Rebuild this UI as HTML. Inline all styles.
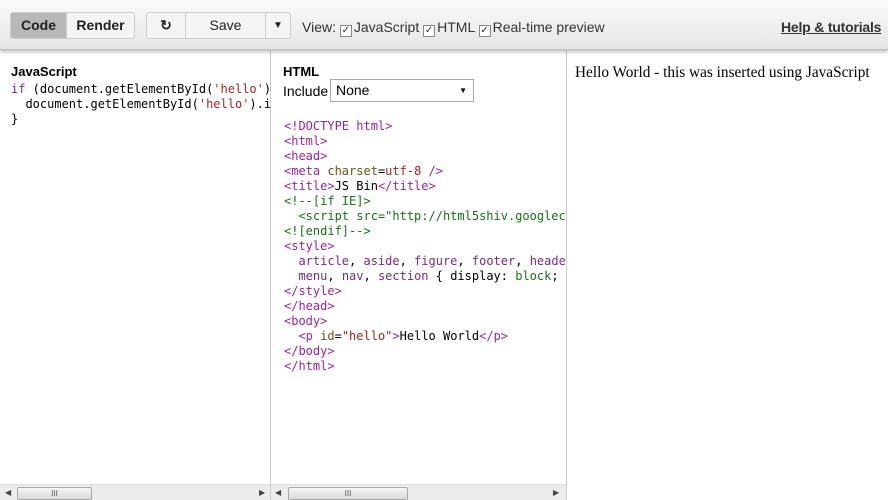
<!DOCTYPE html>
<html><head><style>
*{margin:0;padding:0;box-sizing:border-box}
body{width:888px;height:500px;overflow:hidden;background:#fff;font-family:"Liberation Sans",sans-serif;position:relative}
#bar{position:absolute;left:0;top:0;width:888px;height:50px;background:linear-gradient(#fafafa,#e6e6e6);border-bottom:1px solid #bbb;box-shadow:0 2px 4px rgba(0,0,0,.25);z-index:2}
.btn{position:absolute;top:12px;height:27px;border:1px solid #ccc;font-size:14px;line-height:25px;text-align:center;color:#222}
.lbl{position:absolute;top:19px;font-size:14px;color:#333}
.cb{display:inline-block;width:12px;height:12px;border:1px solid #888;background:#fff;vertical-align:-1px;margin-right:2px;font-size:10px;line-height:10px;text-align:center;color:#333}
.pane{position:absolute;top:51px;bottom:0}
pre{font-family:"DejaVu Sans Mono",monospace;font-size:12px;line-height:15px;color:#000;white-space:pre}
.t{color:#a0209f}.a{color:#7a4e0a}.s{color:#b11e1e}.c{color:#228b22}.k{color:#7a2a8a}.g{color:#117711}
.sb{position:absolute;bottom:0;height:16px;background:#ececec;border-top:1px solid #ddd}
.th{position:absolute;top:2px;height:13px;border:1px solid #aaa;border-radius:2px;background:linear-gradient(#f6f6f6,#d8d8d8);font-size:8px;text-align:center;line-height:11px;color:#555}
.ar{position:absolute;top:3px;font-size:8px;color:#444}
</style></head><body>
<div id="bar">
<div class="btn" style="left:10px;width:57px;background:#b8b8b8;font-weight:bold;border-radius:3px 0 0 3px">Code</div>
<div class="btn" style="left:66px;width:69px;background:#f4f4f4;font-weight:bold;border-radius:0 3px 3px 0">Render</div>
<div class="btn" style="left:146px;width:40px;background:#f4f4f4;border-radius:3px 0 0 3px;font-weight:bold">↻</div>
<div class="btn" style="left:185px;width:81px;background:#f4f4f4">Save</div>
<div class="btn" style="left:265px;width:26px;background:#f4f4f4;border-radius:0 3px 3px 0;font-size:10px">▼</div>
<div class="lbl" style="left:302px">View: <span class="cb">✓</span>JavaScript <span class="cb">✓</span>HTML <span class="cb">✓</span>Real-time preview</div>
<div class="lbl" style="left:781px;font-weight:bold;text-decoration:underline;color:#333;letter-spacing:-0.2px">Help &amp; tutorials</div>
</div>
<div class="pane" style="left:0;width:271px;border-right:1px solid #ccc;overflow:hidden">
<div style="position:absolute;left:11px;top:13px;font-size:13px;font-weight:bold">JavaScript</div>
<pre style="position:absolute;left:11px;top:31px"><span class="k">if</span> (document.getElementById(<span class="s">'hello'</span>)
  document.getElementById(<span class="s">'hello'</span>).i
}</pre>
<div class="sb" style="left:0;width:271px"><span class="ar" style="left:5px">◀</span><div class="th" style="left:17px;width:75px">III</div><span class="ar" style="left:259px">▶</span></div>
</div>
<div class="pane" style="left:271px;width:296px;border-right:1px solid #ccc;overflow:hidden">
<div style="position:absolute;left:12px;top:13px;font-size:13px;font-weight:bold">HTML</div>
<div style="position:absolute;left:12px;top:32px;font-size:14px">Include</div>
<div style="position:absolute;left:59px;top:28px;width:144px;height:23px;border:1px solid #aaa;font-size:14px;line-height:21px;padding-left:5px">None<span style="position:absolute;right:6px;font-size:8px">▼</span></div>
<pre style="position:absolute;left:13px;top:68px"><span class="t">&lt;!DOCTYPE html&gt;</span>
<span class="t">&lt;html&gt;</span>
<span class="t">&lt;head&gt;</span>
<span class="t">&lt;meta</span> <span class="a">charset</span>=<span class="s">utf-8</span> <span class="t">/&gt;</span>
<span class="t">&lt;title&gt;</span>JS Bin<span class="t">&lt;/title&gt;</span>
<span class="g">&lt;!--[if IE]&gt;</span>
<span class="g">  &lt;script src="http://html5shiv.googlec</span>
<span class="g">&lt;![endif]--&gt;</span>
<span class="t">&lt;style&gt;</span>
  <span class="k">article</span>, <span class="k">aside</span>, <span class="k">figure</span>, <span class="k">footer</span>, <span class="k">heade</span>
  <span class="k">menu</span>, <span class="k">nav</span>, <span class="k">section</span> { display: <span class="g">block</span>;
<span class="t">&lt;/style&gt;</span>
<span class="t">&lt;/head&gt;</span>
<span class="t">&lt;body&gt;</span>
  <span class="t">&lt;p</span> <span class="a">id</span>=<span class="s">"hello"</span><span class="t">&gt;</span>Hello World<span class="t">&lt;/p&gt;</span>
<span class="t">&lt;/body&gt;</span>
<span class="t">&lt;/html&gt;</span></pre>
<div class="sb" style="left:0;width:296px"><span class="ar" style="left:4px">◀</span><div class="th" style="left:17px;width:120px">III</div><span class="ar" style="left:282px">▶</span></div>
</div>
<div style="position:absolute;left:575px;top:64px;font-family:'Liberation Serif',serif;font-size:15.3px">Hello World - this was inserted using JavaScript</div>
</body></html>
